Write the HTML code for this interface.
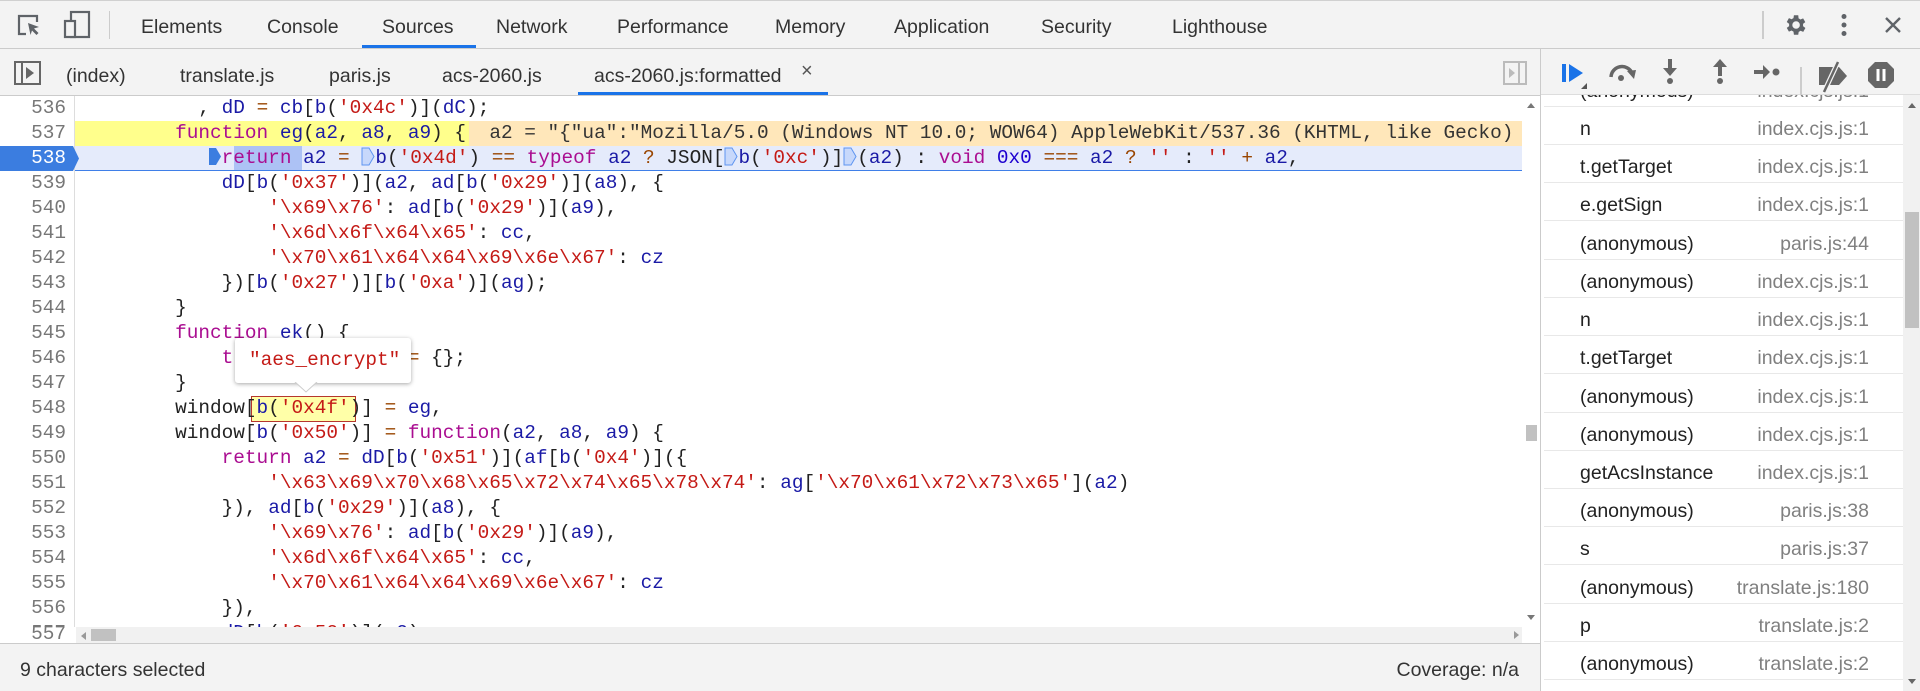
<!DOCTYPE html>
<html><head><meta charset="utf-8"><style>
*{margin:0;padding:0;box-sizing:border-box}
body{width:1920px;height:691px;overflow:hidden;background:#fff;position:relative;font-family:"Liberation Sans",sans-serif;color:#333}
.abs{position:absolute}
#top{left:0;top:0;width:1920px;height:49px;background:#f3f3f3;border-top:1px solid #d0d0d0;border-bottom:1px solid #cbcbcb}
.tab{position:absolute;top:15px;font-size:19.5px;color:#333}
#bar2{left:0;top:49px;width:1540px;height:47px;background:#f3f3f3;border-bottom:1px solid #cbcbcb}
.ft{position:absolute;top:16px;font-size:19.5px;color:#333}
#code{left:0;top:96px;width:1522px;height:531px;overflow:hidden;background:#fff}
#gut{left:0;top:0;width:75px;height:531px;border-right:1px solid #ddd;background:#fff}
.ln{position:absolute;left:0;width:66px;text-align:right;font-family:"Liberation Mono",monospace;font-size:19.4px;color:#777;line-height:25px;height:25px}
.cl{position:absolute;left:82px;white-space:pre;font-family:"Liberation Mono",monospace;font-size:19.4px;line-height:25px;height:25px;color:#222}
.k{color:#aa0d91}.v{color:#1a1aa6}.s{color:#c41a16}.o{color:#994500}.n{color:#1c00cf}
.mk{display:inline-block;width:14px;height:19px;vertical-align:-3px}
#right{left:1540px;top:49px;width:380px;height:642px;background:#fff;border-left:1px solid #cbcbcb}
.row{position:absolute;left:3px;width:360px;height:38px;border-bottom:1px solid #e8e8e8;font-size:19.5px}
.row .a{position:absolute;left:36px;top:11px;color:#222}
.row .b{position:absolute;right:35px;top:11px;color:#808080}
</style></head><body>

<div id="top" class="abs">
  <svg class="abs" style="left:16px;top:11px" width="26" height="26" viewBox="0 0 26 26"><path d="M10 22H3V4h18v6" fill="none" stroke="#5f6368" stroke-width="2.2"/><path d="M12 11l11 4-5 1.5 4.5 4.5-2 2-4.5-4.5L14.5 23z" fill="#5f6368"/></svg>
  <svg class="abs" style="left:62px;top:9px" width="30" height="30" viewBox="0 0 30 30"><rect x="9" y="2" width="18" height="25" fill="none" stroke="#5f6368" stroke-width="2.2"/><rect x="3" y="11" width="10" height="16" fill="#f3f3f3" stroke="#5f6368" stroke-width="2.2"/></svg>
  <div class="abs" style="left:109px;top:10px;width:1px;height:28px;background:#ccc"></div>
  <div class="tab" style="left:141px">Elements</div>
  <div class="tab" style="left:267px">Console</div>
  <div class="tab" style="left:382px">Sources</div>
  <div class="abs" style="left:362px;top:44px;width:114px;height:3px;background:#1a73e8"></div>
  <div class="tab" style="left:496px">Network</div>
  <div class="tab" style="left:617px">Performance</div>
  <div class="tab" style="left:775px">Memory</div>
  <div class="tab" style="left:894px">Application</div>
  <div class="tab" style="left:1041px">Security</div>
  <div class="tab" style="left:1172px">Lighthouse</div>
  <div class="abs" style="left:1762px;top:10px;width:2px;height:28px;background:#ccc"></div>
  <svg class="abs" style="left:1782px;top:11px" width="26" height="26" viewBox="0 0 24 24"><path fill="#5f6368" d="M19.4 13a7.5 7.5 0 000-2l2.1-1.6-2-3.5-2.5 1a7 7 0 00-1.7-1L15 3h-4l-.4 2.7a7 7 0 00-1.7 1l-2.5-1-2 3.5L6.6 11a7.5 7.5 0 000 2l-2.2 1.6 2 3.5 2.5-1a7 7 0 001.7 1L11 21h4l.4-2.7a7 7 0 001.7-1l2.5 1 2-3.5zM13 15.5a3.5 3.5 0 110-7 3.5 3.5 0 010 7z"/></svg>
  <svg class="abs" style="left:1838px;top:12px" width="12" height="24" viewBox="0 0 12 24"><circle cx="6" cy="3.5" r="2.5" fill="#5f6368"/><circle cx="6" cy="12" r="2.5" fill="#5f6368"/><circle cx="6" cy="20.5" r="2.5" fill="#5f6368"/></svg>
  <svg class="abs" style="left:1884px;top:15px" width="18" height="18" viewBox="0 0 18 18"><path d="M2 2l14 14M16 2L2 16" stroke="#5f6368" stroke-width="2.4"/></svg>
</div>

<div id="bar2" class="abs">
  <svg class="abs" style="left:14px;top:12px" width="28" height="24" viewBox="0 0 28 24"><rect x="1" y="1" width="25" height="22" fill="none" stroke="#666" stroke-width="2"/><line x1="8" y1="1" x2="8" y2="23" stroke="#666" stroke-width="2"/><path d="M12 6l8 6-8 6z" fill="#666"/></svg>
  <div class="ft" style="left:66px">(index)</div>
  <div class="ft" style="left:180px">translate.js</div>
  <div class="ft" style="left:329px">paris.js</div>
  <div class="ft" style="left:442px">acs-2060.js</div>
  <div class="ft" style="left:594px">acs-2060.js:formatted</div>
  <div class="ft" style="left:801px;top:11px;font-size:20px;color:#555">×</div>
  <div class="abs" style="left:578px;top:43px;width:250px;height:3px;background:#1a73e8"></div>
  <svg class="abs" style="left:1503px;top:12px" width="24" height="24" viewBox="0 0 24 24"><rect x="1" y="1" width="22" height="22" fill="none" stroke="#bbb" stroke-width="2"/><line x1="16" y1="1" x2="16" y2="23" stroke="#bbb" stroke-width="2"/><path d="M6 7l6 5-6 5z" fill="#bbb"/></svg>
</div>

<div id="code" class="abs">
  <div class="abs" style="left:75px;top:25px;width:394px;height:25px;background:#ffff8c"></div>
  <div class="abs" style="left:469px;top:25px;width:1053px;height:25px;background:#ffe7ba"></div>
  <div class="abs" style="left:75px;top:50px;width:1447px;height:25px;background:#e5ebfb;border-bottom:1px solid #3f7fe8"></div>
  <div class="abs" style="left:234px;top:50px;width:68px;height:24px;background:#adc2f5"></div>
  <div id="gut" class="abs"></div>
  <svg class="abs" style="left:0;top:50px" width="80" height="25" viewBox="0 0 80 25"><path d="M0 0H73L79 12.5 73 25H0z" fill="#3b7de0"/></svg>

  <div class="ln" style="top:0">536</div>
  <div class="ln" style="top:25px">537</div>
  <div class="ln" style="top:50px;color:#fff">538</div>
  <div class="ln" style="top:75px">539</div>
  <div class="ln" style="top:100px">540</div>
  <div class="ln" style="top:125px">541</div>
  <div class="ln" style="top:150px">542</div>
  <div class="ln" style="top:175px">543</div>
  <div class="ln" style="top:200px">544</div>
  <div class="ln" style="top:225px">545</div>
  <div class="ln" style="top:250px">546</div>
  <div class="ln" style="top:275px">547</div>
  <div class="ln" style="top:300px">548</div>
  <div class="ln" style="top:325px">549</div>
  <div class="ln" style="top:350px">550</div>
  <div class="ln" style="top:375px">551</div>
  <div class="ln" style="top:400px">552</div>
  <div class="ln" style="top:425px">553</div>
  <div class="ln" style="top:450px">554</div>
  <div class="ln" style="top:475px">555</div>
  <div class="ln" style="top:500px">556</div>
  <div class="ln" style="top:525px">557</div>

  <div class="cl" style="top:0">          , <span class="v">dD</span> <span class="o">=</span> <span class="v">cb</span>[<span class="v">b</span>(<span class="s">'0x4c'</span>)](<span class="v">dC</span>);</div>
  <div class="cl" style="top:25px">        <span class="k">function</span> <span class="v">eg</span>(<span class="v">a2</span>, <span class="v">a8</span>, <span class="v">a9</span>) {  <span style="color:#333">a2 = "{"ua":"Mozilla/5.0 (Windows NT 10.0; WOW64) AppleWebKit/537.36 (KHTML, like Gecko) Chrome/86.0</span></div>
  <div class="cl" style="top:50px">            <svg class="mk" viewBox="0 0 14 19" style="margin-left:-14px"><path d="M1 1h7l5 8.5-5 8.5H1z" fill="#3b7de0"/></svg><span class="k">return</span> <span class="v">a2</span> <span class="o">=</span> <svg class="mk" viewBox="0 0 14 19"><path d="M1 1h7l5 8.5-5 8.5H1z" fill="#c7d8fb" stroke="#5e95f0"/></svg><span class="v">b</span>(<span class="s">'0x4d'</span>) <span class="o">==</span> <span class="k">typeof</span> <span class="v">a2</span> <span class="o">?</span> JSON[<svg class="mk" viewBox="0 0 14 19"><path d="M1 1h7l5 8.5-5 8.5H1z" fill="#c7d8fb" stroke="#5e95f0"/></svg><span class="v">b</span>(<span class="s">'0xc'</span>)]<svg class="mk" viewBox="0 0 14 19"><path d="M1 1h7l5 8.5-5 8.5H1z" fill="#c7d8fb" stroke="#5e95f0"/></svg>(<span class="v">a2</span>) : <span class="k">void</span> <span class="n">0x0</span> <span class="o">===</span> <span class="v">a2</span> <span class="o">?</span> <span class="s">''</span> : <span class="s">''</span> <span class="o">+</span> <span class="v">a2</span>,</div>
  <div class="cl" style="top:75px">            <span class="v">dD</span>[<span class="v">b</span>(<span class="s">'0x37'</span>)](<span class="v">a2</span>, <span class="v">ad</span>[<span class="v">b</span>(<span class="s">'0x29'</span>)](<span class="v">a8</span>), {</div>
  <div class="cl" style="top:100px">                <span class="s">'\x69\x76'</span>: <span class="v">ad</span>[<span class="v">b</span>(<span class="s">'0x29'</span>)](<span class="v">a9</span>),</div>
  <div class="cl" style="top:125px">                <span class="s">'\x6d\x6f\x64\x65'</span>: <span class="v">cc</span>,</div>
  <div class="cl" style="top:150px">                <span class="s">'\x70\x61\x64\x64\x69\x6e\x67'</span>: <span class="v">cz</span></div>
  <div class="cl" style="top:175px">            })[<span class="v">b</span>(<span class="s">'0x27'</span>)][<span class="v">b</span>(<span class="s">'0xa'</span>)](<span class="v">ag</span>);</div>
  <div class="cl" style="top:200px">        }</div>
  <div class="cl" style="top:225px">        <span class="k">function</span> <span class="v">ek</span>() {</div>
  <div class="cl" style="top:250px">            <span class="k">this</span>[<span class="v">b</span>(<span class="s">'0x4e'</span>)] <span class="o">=</span> {};</div>
  <div class="cl" style="top:275px">        }</div>
  <div class="abs" style="left:251px;top:300px;width:105px;height:26px;background:#ffffa8;border:1.5px solid #b5372e"></div>
  <div class="cl" style="top:300px">        window[<span class="v">b</span>(<span class="s">'0x4f'</span>)] <span class="o">=</span> <span class="v">eg</span>,</div>
  <div class="cl" style="top:325px">        window[<span class="v">b</span>(<span class="s">'0x50'</span>)] <span class="o">=</span> <span class="k">function</span>(<span class="v">a2</span>, <span class="v">a8</span>, <span class="v">a9</span>) {</div>
  <div class="cl" style="top:350px">            <span class="k">return</span> <span class="v">a2</span> <span class="o">=</span> <span class="v">dD</span>[<span class="v">b</span>(<span class="s">'0x51'</span>)](<span class="v">af</span>[<span class="v">b</span>(<span class="s">'0x4'</span>)]({</div>
  <div class="cl" style="top:375px">                <span class="s">'\x63\x69\x70\x68\x65\x72\x74\x65\x78\x74'</span>: <span class="v">ag</span>[<span class="s">'\x70\x61\x72\x73\x65'</span>](<span class="v">a2</span>)</div>
  <div class="cl" style="top:400px">            }), <span class="v">ad</span>[<span class="v">b</span>(<span class="s">'0x29'</span>)](<span class="v">a8</span>), {</div>
  <div class="cl" style="top:425px">                <span class="s">'\x69\x76'</span>: <span class="v">ad</span>[<span class="v">b</span>(<span class="s">'0x29'</span>)](<span class="v">a9</span>),</div>
  <div class="cl" style="top:450px">                <span class="s">'\x6d\x6f\x64\x65'</span>: <span class="v">cc</span>,</div>
  <div class="cl" style="top:475px">                <span class="s">'\x70\x61\x64\x64\x69\x6e\x67'</span>: <span class="v">cz</span></div>
  <div class="cl" style="top:500px">            }),</div>
  <div class="cl" style="top:525px">            <span class="v">dD</span>[<span class="v">b</span>(<span class="s">'0x52'</span>)](<span class="v">a2</span>);</div>

  <div class="abs" style="left:235px;top:242px;width:176px;height:45px;background:#fff;border-radius:3px;box-shadow:0 1px 4px rgba(0,0,0,.35)"></div>
  <svg class="abs" style="left:294px;top:285px" width="24" height="12" viewBox="0 0 24 12"><path d="M0 0L12 11 24 0z" fill="#fff" stroke="#ccc"/><path d="M0 0h24" stroke="#fff" stroke-width="2"/></svg>
  <div class="cl" style="left:249px;top:252px;color:#c41a16">"aes_encrypt"</div>
</div>

<div class="abs" style="left:1522px;top:96px;width:18px;height:531px;background:#fff"></div>
<div class="abs" style="left:1527px;top:103px;width:0;height:0;border:4px solid transparent;border-bottom:5px solid #777;border-top:0"></div>
<div class="abs" style="left:1527px;top:615px;width:0;height:0;border:4px solid transparent;border-top:5px solid #777;border-bottom:0"></div>
<div class="abs" style="left:1526px;top:425px;width:11px;height:16px;background:#c1c1c1"></div>
<div class="abs" style="left:76px;top:627px;width:1446px;height:16px;background:#f1f1f1"></div>
<div class="abs" style="left:81px;top:632px;width:0;height:0;border:4px solid transparent;border-right:5px solid #999;border-left:0"></div>
<div class="abs" style="left:91px;top:629px;width:25px;height:12px;background:#c1c1c1"></div>
<div class="abs" style="left:1514px;top:631px;width:0;height:0;border:4px solid transparent;border-left:5px solid #999;border-right:0"></div>
<div class="abs" style="left:0;top:627px;width:76px;height:16px;background:#fff"></div>
<div class="cl" style="left:0;top:622px;width:66px;text-align:right;color:#777;height:21px;overflow:hidden">557</div>
<div class="abs" style="left:0;top:643px;width:1541px;height:48px;background:#f3f3f3;border-top:1px solid #cbcbcb"></div>
<div class="abs" style="left:20px;top:659px;font-size:19.5px;color:#333">9 characters selected</div>
<div class="abs" style="left:1371px;top:659px;font-size:19.5px;color:#333;width:148px;text-align:right">Coverage: n/a</div>

<div id="right" class="abs">
  <div class="row" style="top:20px;overflow:hidden;height:38px"><span class="a">(anonymous)</span><span class="b">index.cjs.js:1</span></div>
  <div class="abs" style="left:0;top:0;width:380px;height:46px;background:#f3f3f3;border-bottom:1px solid #ddd"></div>
  <svg class="abs" style="left:19px;top:12px" width="36" height="30" viewBox="0 0 36 30"><rect x="2" y="3" width="4" height="18" fill="#1a73e8"/><path d="M9 3l14 9-14 9z" fill="#1a73e8"/><path d="M21 28h6v-6z" fill="#555"/></svg>
  <svg class="abs" style="left:66px;top:11px" width="32" height="26" viewBox="0 0 32 26"><path d="M4 17a11 11 0 0121-4" fill="none" stroke="#666" stroke-width="3.5"/><path d="M20 11l9-1-2 9z" fill="#666"/><circle cx="14" cy="18" r="3" fill="#666"/></svg>
  <svg class="abs" style="left:120px;top:8px" width="18" height="30" viewBox="0 0 18 30"><path d="M7 2h4v9h5l-7 8-7-8h5z" fill="#666"/><circle cx="9" cy="24" r="3" fill="#666"/></svg>
  <svg class="abs" style="left:170px;top:8px" width="18" height="30" viewBox="0 0 18 30"><path d="M9 2l7 8h-5v9H7v-9H2z" fill="#666"/><circle cx="9" cy="24" r="3" fill="#666"/></svg>
  <svg class="abs" style="left:211px;top:14px" width="30" height="18" viewBox="0 0 30 18"><path d="M2 7h9V2l7 7-7 7v-5H2z" fill="#666"/><circle cx="24" cy="9" r="3.5" fill="#666"/></svg>
  <div class="abs" style="left:259px;top:18px;width:2px;height:28px;background:#ccc"></div>
  <svg class="abs" style="left:275px;top:12px" width="34" height="32" viewBox="0 0 34 32"><path d="M3 6h20l8 9-8 9H3z" fill="#666"/><path d="M22 1L8 31" stroke="#f3f3f3" stroke-width="5"/><path d="M22 1L8 31" stroke="#666" stroke-width="2.5"/></svg>
  <svg class="abs" style="left:325px;top:11px" width="30" height="30" viewBox="0 0 30 30"><path d="M9 2h12l7 7v12l-7 7H9l-7-7V9z" fill="#666"/><rect x="10.5" y="9" width="3" height="12" fill="#fff"/><rect x="16.5" y="9" width="3" height="12" fill="#fff"/></svg>

  <div class="row" style="top:58px"><span class="a">n</span><span class="b">index.cjs.js:1</span></div>
  <div class="row" style="top:96px"><span class="a">t.getTarget</span><span class="b">index.cjs.js:1</span></div>
  <div class="row" style="top:134px"><span class="a">e.getSign</span><span class="b">index.cjs.js:1</span></div>
  <div class="row" style="top:173px"><span class="a">(anonymous)</span><span class="b">paris.js:44</span></div>
  <div class="row" style="top:211px"><span class="a">(anonymous)</span><span class="b">index.cjs.js:1</span></div>
  <div class="row" style="top:249px"><span class="a">n</span><span class="b">index.cjs.js:1</span></div>
  <div class="row" style="top:287px"><span class="a">t.getTarget</span><span class="b">index.cjs.js:1</span></div>
  <div class="row" style="top:326px"><span class="a">(anonymous)</span><span class="b">index.cjs.js:1</span></div>
  <div class="row" style="top:364px"><span class="a">(anonymous)</span><span class="b">index.cjs.js:1</span></div>
  <div class="row" style="top:402px"><span class="a">getAcsInstance</span><span class="b">index.cjs.js:1</span></div>
  <div class="row" style="top:440px"><span class="a">(anonymous)</span><span class="b">paris.js:38</span></div>
  <div class="row" style="top:478px"><span class="a">s</span><span class="b">paris.js:37</span></div>
  <div class="row" style="top:517px"><span class="a">(anonymous)</span><span class="b">translate.js:180</span></div>
  <div class="row" style="top:555px"><span class="a">p</span><span class="b">translate.js:2</span></div>
  <div class="row" style="top:593px"><span class="a">(anonymous)</span><span class="b">translate.js:2</span></div>

  <div class="abs" style="left:362px;top:46px;width:18px;height:596px;background:#f1f1f1"></div>
  <div class="abs" style="left:367px;top:54px;width:0;height:0;border:4px solid transparent;border-bottom:5px solid #666;border-top:0"></div>
  <div class="abs" style="left:367px;top:630px;width:0;height:0;border:4px solid transparent;border-top:5px solid #666;border-bottom:0"></div>
  <div class="abs" style="left:364px;top:163px;width:14px;height:116px;background:#c1c1c1"></div>
</div>
</body></html>
